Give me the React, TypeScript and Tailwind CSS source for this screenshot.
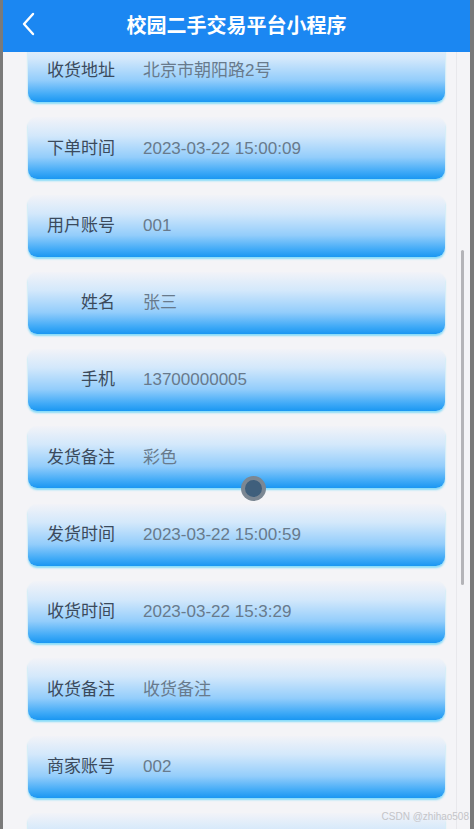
import React from "react";

const rows: { label: string; value: string }[] = [
  { label: "收货地址", value: "北京市朝阳路2号" },
  { label: "下单时间", value: "2023-03-22 15:00:09" },
  { label: "用户账号", value: "001" },
  { label: "姓名", value: "张三" },
  { label: "手机", value: "13700000005" },
  { label: "发货备注", value: "彩色" },
  { label: "发货时间", value: "2023-03-22 15:00:59" },
  { label: "收货时间", value: "2023-03-22 15:3:29" },
  { label: "收货备注", value: "收货备注" },
  { label: "商家账号", value: "002" },
  { label: "", value: "" },
];

const font = { fontFamily: '"Liberation Sans", "Noto Sans CJK SC", sans-serif' };

const App = () => {
  return (
    <div
      className="relative w-[474px] h-[829px] overflow-hidden bg-[#7a7a7a] flex"
      style={font}
    >
      <div className="ml-[3px] mr-[4px] flex-1 flex flex-col bg-[#f4f4f7] overflow-hidden relative">
        <header className="h-[52px] shrink-0 bg-[#1b87f2] flex items-center relative z-10">
          <svg
            className="absolute left-[17px] top-[11px]"
            width="18"
            height="26"
            viewBox="0 0 18 26"
            fill="none"
          >
            <polyline
              points="13,3 4,13 13,23"
              stroke="white"
              strokeWidth="2.4"
              strokeLinecap="round"
              strokeLinejoin="round"
            />
          </svg>
          <h1 className="w-full text-center text-white font-bold text-[20px]">
            校园二手交易平台小程序
          </h1>
        </header>

        <div className="flex-1 overflow-hidden">
          <div className="-mt-[12px] pl-[25px] pr-[25px] flex flex-col gap-[15.3px]">
            {rows.map((row, index) => (
              <div
                key={index}
                className="h-[62px] shrink-0 rounded-[9px] flex items-center bg-[linear-gradient(to_bottom,#f2f3f8_0%,#d3e8fb_30%,#93cdfb_65%,#40aaf7_88%,#1a97f2_100%)] shadow-[0_2px_2px_rgba(90,210,250,0.7)]"
              >
                <div className="w-[87px] text-right text-[17px] text-[#3b4a5c]">
                  {row.label}
                </div>
                <div className="ml-[28px] text-[17px] text-[#687a8c]">
                  {row.value}
                </div>
              </div>
            ))}
          </div>
        </div>

        <div className="absolute left-[453px] top-[52px] bottom-0 w-px bg-[#e8e8ec]" />
        <div className="absolute left-[458px] top-[250px] h-[335px] w-[3px] rounded-full bg-[#b4b4b8]" />
      </div>

      <div className="absolute left-[241px] top-[476px] w-[25px] h-[25px] rounded-full bg-[#3f5f7c] border-[4px] border-[#8b9198]/80" />

      <div className="absolute right-[5px] bottom-[5px] text-[10px] text-[#c4c4c8]">
        CSDN @zhihao508
      </div>
    </div>
  );
};

export default App;
